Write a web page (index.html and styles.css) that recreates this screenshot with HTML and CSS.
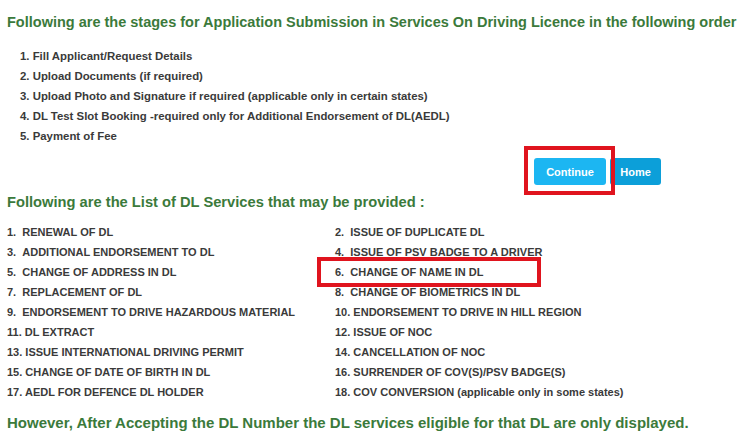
FILE: index.html
```html
<!DOCTYPE html>
<html>
<head>
<meta charset="utf-8">
<link rel="stylesheet" href="styles.css">
</head>
<body>
<div class="page">
  <h1 class="title main">Following are the stages for Application Submission in Services On Driving Licence in the following order</h1>
  <ol class="stages">
    <li>1. Fill Applicant/Request Details</li>
    <li>2. Upload Documents (if required)</li>
    <li>3. Upload Photo and Signature if required (applicable only in certain states)</li>
    <li>4. DL Test Slot Booking -required only for Additional Endorsement of DL(AEDL)</li>
    <li>5. Payment of Fee</li>
  </ol>
  <div class="actions">
    <button class="btn btn-continue">Continue</button>
    <button class="btn btn-home">Home</button>
  </div>
  <h2 class="title sub">Following are the List of DL Services that may be provided :</h2>
  <ul class="services">
    <li>1.&nbsp;&nbsp;RENEWAL OF DL</li>
    <li>2.&nbsp;&nbsp;ISSUE OF DUPLICATE DL</li>
    <li>3.&nbsp;&nbsp;ADDITIONAL ENDORSEMENT TO DL</li>
    <li>4.&nbsp;&nbsp;ISSUE OF PSV BADGE TO A DRIVER</li>
    <li>5.&nbsp;&nbsp;CHANGE OF ADDRESS IN DL</li>
    <li class="marked">6.&nbsp;&nbsp;CHANGE OF NAME IN DL</li>
    <li>7.&nbsp;&nbsp;REPLACEMENT OF DL</li>
    <li>8.&nbsp;&nbsp;CHANGE OF BIOMETRICS IN DL</li>
    <li>9.&nbsp;&nbsp;ENDORSEMENT TO DRIVE HAZARDOUS MATERIAL</li>
    <li>10. ENDORSEMENT TO DRIVE IN HILL REGION</li>
    <li>11. DL EXTRACT</li>
    <li>12. ISSUE OF NOC</li>
    <li>13. ISSUE INTERNATIONAL DRIVING PERMIT</li>
    <li>14. CANCELLATION OF NOC</li>
    <li>15. CHANGE OF DATE OF BIRTH IN DL</li>
    <li>16. SURRENDER OF COV(S)/PSV BADGE(S)</li>
    <li>17. AEDL FOR DEFENCE DL HOLDER</li>
    <li>18. COV CONVERSION (applicable only in some states)</li>
  </ul>
  <h2 class="title foot">However, After Accepting the DL Number the DL services eligible for that DL are only displayed.</h2>
</div>
</body>
</html>
```

FILE: styles.css
```css
html, body {
  margin: 0;
  padding: 0;
  background: #ffffff;
}

.page {
  font-family: "Liberation Sans", Arial, sans-serif;
  padding: 13px 0 0 7px;
  width: 740px;
}

.title {
  margin: 0;
  font-size: 15px;
  line-height: 18px;
  font-weight: bold;
  color: #3b7a3b;
  white-space: nowrap;
}

.main {
  font-size: 14.5px;
}

.stages {
  list-style: none;
  margin: 15px 0 0 0;
  padding: 0 0 0 13px;
}

.stages li {
  font-size: 11.4px;
}

.stages li,
.services li {
  line-height: 20px;
  font-weight: bold;
  color: #3a3a3a;
  white-space: nowrap;
}

.services li {
  font-size: 11px;
}

.actions {
  display: flex;
  gap: 4px;
  margin: 12px 0 0 527px;
}

.btn {
  font-family: "Liberation Sans", Arial, sans-serif;
  font-size: 11px;
  font-weight: bold;
  color: #ffffff;
  border: 0;
  border-radius: 3px;
  height: 27px;
  padding: 0;
}

.btn-continue {
  position: relative;
  width: 72px;
  background: #1cb6f2;
}

.btn-continue::after {
  content: "";
  position: absolute;
  left: -10px;
  top: -12px;
  right: -9px;
  bottom: -10px;
  border: 4px solid #e0141e;
}

.btn-home {
  width: 51px;
  background: #0c9fd9;
}

.sub {
  margin-top: 8px;
  font-size: 14.7px;
}

.services {
  list-style: none;
  margin: 11px 0 0 0;
  padding: 0;
  display: grid;
  grid-template-columns: 328px 1fr;
}

.marked {
  position: relative;
}

.marked::after {
  content: "";
  position: absolute;
  left: -18px;
  top: -5px;
  width: 224px;
  height: 30px;
  box-sizing: border-box;
  border: 4px solid #e0141e;
}

.foot {
  margin-top: 12px;
}
```
